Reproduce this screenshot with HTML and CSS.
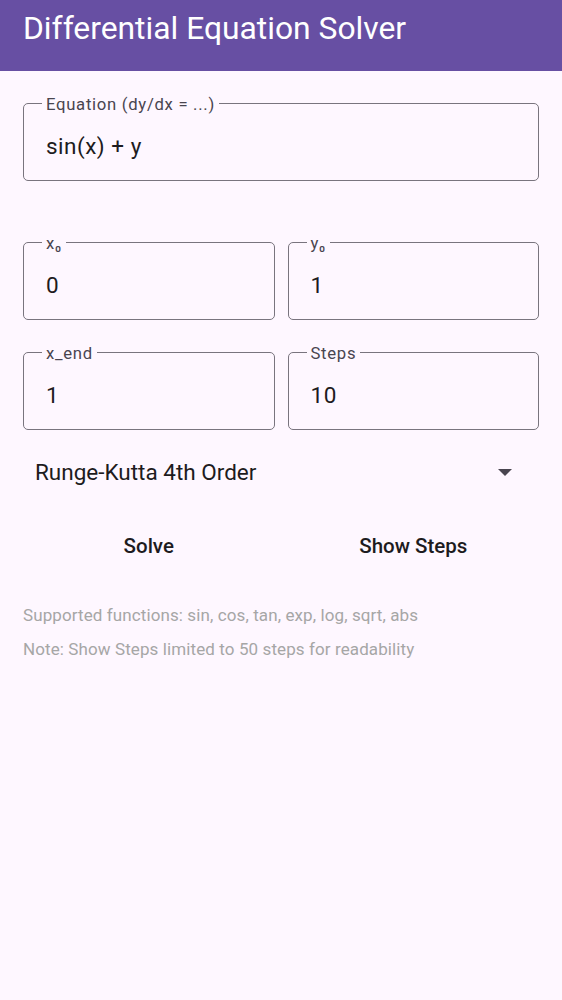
FILE: index.html
```html
<!DOCTYPE html>
<html lang="en">

<head>
    <meta charset="UTF-8">
    <meta name="viewport" content="width=device-width, initial-scale=1.0">
    <title>Differential Equation Solver</title>
    <link rel="stylesheet" href="styles.css">
</head>

<body>
    <header class="app-bar">
        <h1>Differential Equation Solver</h1>
    </header>

    <main class="content">
        <div class="field field-wide">
            <label class="field-label">Equation (dy/dx = ...)</label>
            <span class="field-value">sin(x) + y</span>
        </div>

        <div class="field-grid">
            <div class="field">
                <label class="field-label">x₀</label>
                <span class="field-value">0</span>
            </div>
            <div class="field">
                <label class="field-label">y₀</label>
                <span class="field-value">1</span>
            </div>
            <div class="field">
                <label class="field-label">x_end</label>
                <span class="field-value">1</span>
            </div>
            <div class="field">
                <label class="field-label">Steps</label>
                <span class="field-value">10</span>
            </div>
        </div>

        <div class="dropdown">
            <span>Runge-Kutta 4th Order</span>
            <svg class="dropdown-arrow" width="14" height="7" viewBox="0 0 14 7">
                <path d="M0 0 L14 0 L7 7 Z" fill="#49454F" />
            </svg>
        </div>

        <div class="actions">
            <button class="text-btn">Solve</button>
            <button class="text-btn">Show Steps</button>
        </div>

        <div class="notes">
            <p>Supported functions: sin, cos, tan, exp, log, sqrt, abs</p>
            <p>Note: Show Steps limited to 50 steps for readability</p>
        </div>
    </main>
</body>

</html>
```

FILE: styles.css
```css
body {
    font-family: Roboto, "Liberation Sans", sans-serif;
    background-color: #fef7ff;
    color: #1d1b20;
    margin: 0;
    min-height: 1000px;
}

.app-bar {
    background: #674fa3;
    height: 71px;
    padding: 0 23px;
    display: flex;
    align-items: center;
    box-sizing: border-box;
}

.app-bar h1 {
    margin: 0 0 16px;
    font-size: 31.8px;
    font-weight: 400;
    color: #fff;
}

.content {
    padding: 32px 23px;
}

.field {
    position: relative;
    height: 78px;
    box-sizing: border-box;
    border: 1px solid #79747e;
    border-radius: 5px;
    padding: 8px 22px 0;
    display: flex;
    align-items: center;
}

.field-wide {
    margin-bottom: 61px;
}

.field-label {
    position: absolute;
    top: -9px;
    left: 18px;
    padding: 0 4px;
    background: #fef7ff;
    font-size: 16.7px;
    line-height: 20px;
    letter-spacing: 0.7px;
    color: #49454f;
}

.field-value {
    font-size: 22.5px;
    letter-spacing: 0.5px;
}

.field-grid {
    display: grid;
    grid-template-columns: 1fr 1fr;
    column-gap: 13px;
    row-gap: 32px;
}

.dropdown {
    height: 56px;
    margin-top: 14px;
    padding: 0 27px 0 12px;
    display: flex;
    align-items: center;
    justify-content: space-between;
    font-size: 22.5px;
}

.actions {
    display: grid;
    grid-template-columns: 1fr 1fr;
    column-gap: 13px;
    margin-top: 26px;
}

.text-btn {
    height: 40px;
    border: none;
    background: none;
    font-family: inherit;
    font-size: 20.5px;
    font-weight: 500;
    color: #1d1b20;
}

.notes {
    margin-top: 37px;
}

.notes p {
    margin: 0 0 10px;
    font-size: 17px;
    line-height: 24px;
    letter-spacing: 0.1px;
    color: #a6a6a6;
}
```
